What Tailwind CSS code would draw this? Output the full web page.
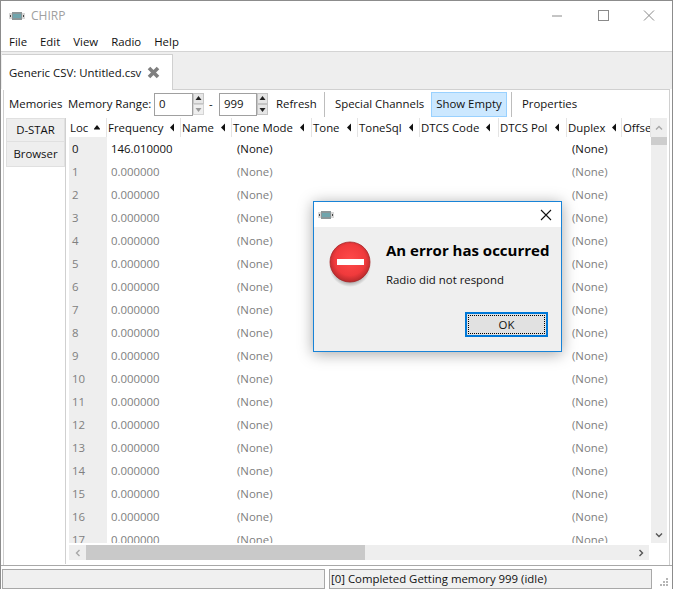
<!DOCTYPE html>
<html lang="en">
<head>
    <meta charset="UTF-8">
    <title>CHIRP</title>
    <script src="https://cdn.jsdelivr.net/npm/@tailwindcss/browser@4"></script>
</head>
<body class="bg-white">
<div class="relative w-[673px] h-[589px] overflow-hidden bg-white border-x border-t border-[#8c8c8c] font-['Open_Sans',sans-serif] text-[11.4px] leading-none text-[#111] whitespace-nowrap">
    <!-- title bar -->
    <div class="h-[29px] flex items-center pl-[8px]">
        <svg width="16" height="8" viewBox="0 0 16 8" class="mr-[6px]"><rect x="0" y="1" width="16" height="6" fill="#d8d8d8"/><rect x="1" y="3" width="1" height="2" fill="#444"/><rect x="14" y="3" width="1" height="2" fill="#444"/><rect x="3" y="0" width="10" height="8" fill="#8b9698"/><rect x="4" y="2" width="8" height="4" fill="#6fa5ad"/></svg>
        <span class="text-[12px] text-[#a0a0a0]">CHIRP</span>
        <div class="ml-auto flex items-center">
            <svg width="46" height="29" viewBox="0 0 46 29"><path d="M18 15h10" stroke="#8a8a8a"/></svg>
            <svg width="46" height="29" viewBox="0 0 46 29"><rect x="18.5" y="9.5" width="10" height="10" fill="none" stroke="#8a8a8a"/></svg>
            <svg width="46" height="29" viewBox="0 0 46 29"><path d="M18 9.5l10 10M28 9.5l-10 10" stroke="#8a8a8a"/></svg>
        </div>
    </div>
    <!-- menu -->
    <div class="h-[22px] flex items-center gap-[13px] pl-[8px] pt-[3px] border-b border-[#d4d4d4]">
        <span>File</span><span>Edit</span><span>View</span><span>Radio</span><span>Help</span>
    </div>
    <!-- tabs -->
    <div class="h-[37px] bg-[#eeeeee] flex items-end pl-[1px]">
        <div class="h-[36px] w-[171px] bg-white border-t border-r border-[#d0d0d0] flex items-center pl-[7px] gap-[6px] mb-[-1px] z-10">
            <span>Generic CSV: Untitled.csv</span>
            <svg width="13" height="13" viewBox="0 0 13 13"><path d="M2 2l9 9M11 2l-9 9" stroke="#7f7f7f" stroke-width="3.6"/></svg>
        </div>
    </div>
    <!-- tab page -->
    <div class="h-[476px] border-t border-x border-[#d0d0d0] mx-[2px] bg-white">
        <!-- toolbar -->
        <div class="h-[28px] flex items-center pl-[5px]">
            <span class="w-[59px]">Memories</span>
            <span class="w-[86px]">Memory Range:</span>
            <div class="w-[39px] h-[23px] border border-[#a0a0a0] flex items-center pl-[4px]">0</div>
            <div class="w-[11px] h-[23px] mr-[5px] flex flex-col items-center justify-center">
                <svg width="11" height="11" viewBox="0 0 11 11"><rect x=".5" y=".5" width="10" height="10" fill="#e6e6e6" stroke="#c4c4c4"/><path d="M5.5 3L8.5 7H2.5z" fill="#222"/></svg>
                <svg width="11" height="11" viewBox="0 0 11 11"><rect x=".5" y=".5" width="10" height="10" fill="#efefef" stroke="#d4d4d4"/><path d="M5.5 8L8.5 4H2.5z" fill="#999"/></svg>
            </div>
            <span class="w-[10px]">-</span>
            <div class="w-[38px] h-[23px] border border-[#a0a0a0] flex items-center pl-[4px]">999</div>
            <div class="w-[11px] h-[23px] mr-[8px] flex flex-col items-center justify-center">
                <svg width="11" height="11" viewBox="0 0 11 11"><rect x=".5" y=".5" width="10" height="10" fill="#e6e6e6" stroke="#c4c4c4"/><path d="M5.5 3L8.5 7H2.5z" fill="#222"/></svg>
                <svg width="11" height="11" viewBox="0 0 11 11"><rect x=".5" y=".5" width="10" height="10" fill="#e6e6e6" stroke="#c4c4c4"/><path d="M5.5 8L8.5 4H2.5z" fill="#222"/></svg>
            </div>
            <span class="w-[48px]">Refresh</span>
            <div class="w-px h-[25px] bg-[#bdbdbd] mr-[10px]"></div>
            <span class="w-[96px]">Special Channels</span>
            <div class="w-[76px] h-[25px] bg-[#cce8ff] border border-[#99d1ff] flex items-center justify-center">Show Empty</div>
            <div class="w-px h-[25px] bg-[#bdbdbd] ml-[4px] mr-[10px]"></div>
            <span>Properties</span>
        </div>
        <!-- body -->
        <div class="flex h-[446px]">
            <div class="w-[62px] shrink-0 border-r border-[#d0d0d0] pl-[2px]">
                <div class="h-[24px] bg-[#eeeeee] border border-[#e0e0e0] flex items-center justify-center">D-STAR</div>
                <div class="h-[25px] bg-[#eeeeee] border border-[#e0e0e0] border-t-0 flex items-center justify-center">Browser</div>
            </div>
            <div class="w-[600px] pl-[3px]">
                <div class="flex h-[425px]">
                    <div class="w-[582px]">
                        <div id="head" class="flex h-[19px] overflow-hidden"></div>
                        <div id="rows" class="h-[406px] overflow-hidden"></div>
                    </div>
                    <!-- vertical scrollbar -->
                    <div class="w-[16px] bg-[#eeeeee] flex flex-col items-center">
                        <div class="h-[19px] flex items-center">
                            <svg width="10" height="10" viewBox="0 0 10 10"><path d="M2 6.5l3-3 3 3" fill="none" stroke="#a8a8a8" stroke-width="1.4"/></svg>
                        </div>
                        <div class="w-[16px] h-[8px] bg-[#cdcdcd]"></div>
                        <div class="mt-auto h-[17px] flex items-center">
                            <svg width="10" height="10" viewBox="0 0 10 10"><path d="M2 3.5l3 3 3-3" fill="none" stroke="#555" stroke-width="1.4"/></svg>
                        </div>
                    </div>
                </div>
                <!-- horizontal scrollbar -->
                <div class="mt-[2px] h-[15px] w-[580px] bg-[#eeeeee] flex items-center">
                    <div class="w-[17px] flex justify-center"><svg width="10" height="10" viewBox="0 0 10 10"><path d="M6.5 2l-3 3 3 3" fill="none" stroke="#a8a8a8" stroke-width="1.4"/></svg></div>
                    <div class="w-[279px] h-[15px] bg-[#c9c9c9]"></div>
                    <div class="ml-auto w-[17px] flex justify-center"><svg width="10" height="10" viewBox="0 0 10 10"><path d="M3.5 2l3 3-3 3" fill="none" stroke="#555" stroke-width="1.4"/></svg></div>
                </div>
            </div>
        </div>
    </div>
    <!-- status bar -->
    <div class="h-[24px] border-t border-[#a8a8a8] flex items-stretch pt-[3px]">
        <div class="w-[323px] ml-[1px] mr-[4px] bg-[#f0f0f0] border border-[#a8a8a8]"></div>
        <div class="w-[323px] bg-[#f0f0f0] border border-[#a8a8a8] flex items-center pl-[1px]">[0] Completed Getting memory 999 (idle)</div>
        <svg width="12" height="12" viewBox="0 0 12 12" class="ml-[5px] self-end mb-[2px]"><g fill="#b5b5b5"><rect x="9" y="9" width="2" height="2"/><rect x="6" y="9" width="2" height="2"/><rect x="3" y="9" width="2" height="2"/><rect x="9" y="6" width="2" height="2"/><rect x="6" y="6" width="2" height="2"/><rect x="9" y="3" width="2" height="2"/></g></svg>
    </div>

    <!-- error dialog -->
    <div class="absolute left-[312px] top-[200px] w-[249px] h-[151px] bg-[#efefef] border border-[#1883d7] shadow-[0_2px_14px_rgba(0,0,0,0.35)]">
        <div class="h-[25px] bg-white flex items-center pl-[4px]">
            <svg width="16" height="8" viewBox="0 0 16 8"><rect x="0" y="1" width="16" height="6" fill="#d8d8d8"/><rect x="1" y="3" width="1" height="2" fill="#444"/><rect x="14" y="3" width="1" height="2" fill="#444"/><rect x="3" y="0" width="10" height="8" fill="#8b9698"/><rect x="4" y="2" width="8" height="4" fill="#6fa5ad"/></svg>
            <svg width="12" height="12" viewBox="0 0 12 12" class="ml-auto mr-[9px]"><path d="M1 1l10 10M11 1L1 11" stroke="#111" stroke-width="1.1"/></svg>
        </div>
        <div class="flex pl-[15px] pt-[14px]">
            <svg width="42" height="46" viewBox="0 0 42 46" class="shrink-0">
                <defs>
                    <radialGradient id="red" cx="50%" cy="45%" r="55%"><stop offset="0%" stop-color="#ff4a4a"/><stop offset="70%" stop-color="#f03a3c"/><stop offset="100%" stop-color="#b72a2c"/></radialGradient>
                    <radialGradient id="drop" cx="50%" cy="50%" r="50%"><stop offset="70%" stop-color="#000" stop-opacity=".35"/><stop offset="100%" stop-color="#000" stop-opacity="0"/></radialGradient>
                </defs>
                <ellipse cx="21" cy="25" rx="21" ry="21" fill="url(#drop)"/>
                <circle cx="21" cy="21" r="20" fill="url(#red)" stroke="#a82628" stroke-width=".8"/>
                <rect x="8" y="18" width="27" height="6" fill="#fff"/>
            </svg>
            <div class="ml-[15px]">
                <div class="text-[15px] font-bold text-black mt-[2px]">An error has occurred</div>
                <div class="mt-[16px]">Radio did not respond</div>
            </div>
        </div>
        <div class="absolute left-[151px] top-[110px] w-[83px] h-[25px] border-2 border-[#0078d7] bg-[#e1e1e1] flex items-center justify-center">
            <div class="w-[77px] h-[19px] border border-dotted border-black flex items-center justify-center">OK</div>
        </div>
    </div>
</div>
<script>
    // columns: title, width, arrow direction
    const cols = [
        ['Loc', 38, 'up'], ['Frequency', 74], ['Name', 51], ['Tone Mode', 80], ['Tone', 46],
        ['ToneSql', 62], ['DTCS Code', 79], ['DTCS Pol', 68], ['Duplex', 55], ['Offset', 29]
    ];
    document.getElementById('head').innerHTML = cols.map(([name, w, dir]) => `
        <div class="h-[19px] shrink-0 border-r border-[#e4e4e4] flex items-center pl-[1px] overflow-hidden" style="width:${w}px">
            <span>${name}</span>
            <svg width="6" height="9" viewBox="0 0 6 9" class="ml-[6px] shrink-0">
                ${dir ? '<path d="M3 2L6.5 6.5H-.5z" fill="#111"/>' : '<path d="M1 4.5L5 .5v8z" fill="#111"/>'}
            </svg>
        </div>`).join('');

    let html = '';
    for (let i = 0; i < 18; i++) {
        const color = i === 0 ? 'text-[#111]' : 'text-[#808080]';
        html += `
        <div class="h-[23px] flex items-center ${color}">
            <div class="w-[38px] h-[23px] bg-[#eeeeee] flex items-center pl-[3px] mr-[4px]">${i}</div>
            <div class="w-[126px]">${i === 0 ? '146.010000' : '0.000000'}</div>
            <div class="w-[335px]">(None)</div>
            <div>(None)</div>
        </div>`;
    }
    document.getElementById('rows').innerHTML = html;
</script>
</body>
</html>
